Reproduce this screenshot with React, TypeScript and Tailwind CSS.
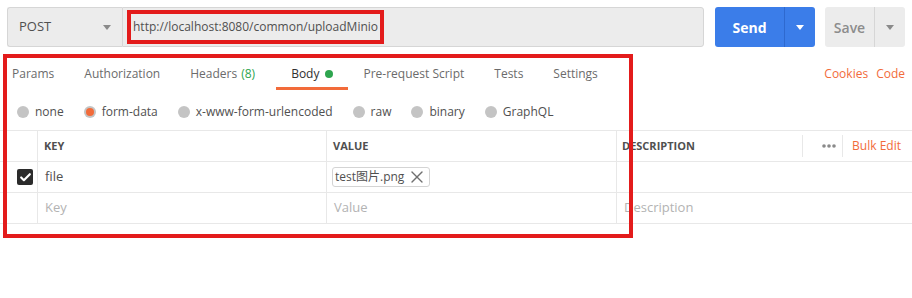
import { Check, X } from 'lucide-react';

function Caret({ color }: { color: string }) {
  return (
    <svg width="8" height="5" viewBox="0 0 8 5">
      <path d="M0 0 L8 0 L4 5 Z" fill={color} />
    </svg>
  );
}

function Radio({ label, active }: { label: string; active?: boolean }) {
  return (
    <div className="flex items-center gap-[6px]">
      <span className="flex h-[12px] w-[12px] items-center justify-center rounded-full bg-[#c4c4c4]">
        {active && <span className="h-[8px] w-[8px] rounded-full bg-[#f26b3a]" />}
      </span>
      <span>{label}</span>
    </div>
  );
}

const tabs = ['Params', 'Authorization', 'Headers', 'Body', 'Pre-request Script', 'Tests', 'Settings'];

export default function App() {
  return (
    <div className="relative h-[298px] w-[912px] bg-white font-['Open_Sans',sans-serif] text-[12px] text-[#505050]">
      {/* request bar */}
      <div className="flex px-[7px] pt-[7px]">
        <div className="flex h-[40px] w-[115px] items-center justify-between rounded-l-[3px] border border-r-0 border-[#d6d6d6] bg-[#ececec] pl-[11px] pr-[11px] text-[13px] text-[#505050]">
          <span>POST</span>
          <Caret color="#8a8a8a" />
        </div>
        <div className="flex h-[40px] w-[582px] items-center rounded-r-[3px] border border-[#d6d6d6] bg-[#ececec] pl-[4px]">
          <span className="flex h-[34px] items-center border-[4px] border-[#e31b1b] px-[2px] text-[12px] text-[#505050]">
            http://localhost:8080/common/uploadMinio
          </span>
        </div>
        <div className="ml-[11px] flex h-[40px] w-[100px] overflow-hidden rounded-[3px] bg-[#3b7de9] text-white">
          <div className="flex w-[69px] items-center justify-center text-[14px] font-bold">Send</div>
          <div className="flex flex-1 items-center justify-center border-l border-[#2e69cf]">
            <Caret color="#ffffff" />
          </div>
        </div>
        <div className="ml-[10px] flex h-[40px] w-[80px] overflow-hidden rounded-[3px] bg-[#ececec] text-[#8c8c8c]">
          <div className="flex w-[49px] items-center justify-center text-[14px] font-semibold">Save</div>
          <div className="flex flex-1 items-center justify-center border-l border-[#d6d6d6]">
            <Caret color="#8a8a8a" />
          </div>
        </div>
      </div>

      {/* tabs */}
      <div className="mt-[13px] flex h-[30px] items-stretch justify-between pl-[12px] pr-[7px]">
        <div className="flex">
          {tabs.map((t, i) => (
            <div
              key={t}
              className={
                'flex items-center border-b-[3px] ' +
                (i === 0 ? 'pr-[15px] ' : t === 'Headers' ? 'pl-[15px] pr-[21px] ' : 'px-[15px] ') +
                (t === 'Body' ? 'border-[#f26b3a] text-[#303030]' : 'border-transparent text-[#6b6b6b]')
              }
            >
              {t}
              {t === 'Headers' && <span className="ml-[4px] text-[#2ea54f]">(8)</span>}
              {t === 'Body' && <span className="ml-[6px] h-[8px] w-[8px] rounded-full bg-[#2ea54f]" />}
            </div>
          ))}
        </div>
        <div className="flex items-center gap-[8px] pb-[3px] text-[#f26b3a]">
          <span>Cookies</span>
          <span>Code</span>
        </div>
      </div>

      {/* body types */}
      <div className="flex h-[40px] items-center gap-[20px] pl-[17px] pt-[4px] text-[12px] text-[#505050]">
        <Radio label="none" />
        <Radio label="form-data" active />
        <Radio label="x-www-form-urlencoded" />
        <Radio label="raw" />
        <Radio label="binary" />
        <Radio label="GraphQL" />
      </div>

      {/* table */}
      <div className="grid grid-cols-[38px_289px_290px_1fr] border-t border-[#e8e8e8]">
        <div className="h-[31px] border-b border-r border-[#e8e8e8]" />
        <div className="flex h-[31px] items-center border-b border-r border-[#e8e8e8] pl-[6px] text-[11px] font-bold text-[#505050]">KEY</div>
        <div className="flex h-[31px] items-center border-b border-r border-[#e8e8e8] pl-[6px] text-[11px] font-bold text-[#505050]">VALUE</div>
        <div className="flex h-[31px] items-center justify-between border-b border-[#e8e8e8] pl-[5px] pr-[11px]">
          <span className="text-[11px] font-bold text-[#505050]">DESCRIPTION</span>
          <div className="flex h-[22px] items-center">
            <span className="h-full border-l border-[#e8e8e8]" />
            <svg width="14" height="4" viewBox="0 0 14 4" className="ml-[19px] mr-[6px]">
              <circle cx="2" cy="2" r="1.8" fill="#8a8a8a" />
              <circle cx="7" cy="2" r="1.8" fill="#8a8a8a" />
              <circle cx="12" cy="2" r="1.8" fill="#8a8a8a" />
            </svg>
            <span className="h-full border-l border-[#e8e8e8]" />
            <span className="ml-[9px] text-[12px] text-[#f26b3a]">Bulk Edit</span>
          </div>
        </div>

        <div className="flex h-[31px] items-center border-b border-r border-[#e8e8e8] pl-[17px]">
          <span className="flex h-[16px] w-[16px] items-center justify-center rounded-[2px] bg-[#2b2b2b]">
            <Check size={13} strokeWidth={4} color="#ffffff" />
          </span>
        </div>
        <div className="flex h-[31px] items-center border-b border-r border-[#e8e8e8] pl-[7px] text-[13px] text-[#505050]">file</div>
        <div className="flex h-[31px] items-center border-b border-r border-[#e8e8e8] pl-[5px] pb-[1px]">
          <span className="flex h-[20px] items-center gap-[3px] rounded-[3px] border border-[#d4d4d4] pl-[2px] pr-[2px] text-[12px] text-[#505050]">
            <span className="font-['Open_Sans','Noto_Sans_CJK_SC',sans-serif]">test图片.png</span>
            <X size={20} strokeWidth={1.6} color="#707070" />
          </span>
        </div>
        <div className="h-[31px] border-b border-[#e8e8e8]" />

        <div className="h-[31px] border-b border-r border-[#e8e8e8]" />
        <div className="flex h-[31px] items-center border-b border-r border-[#e8e8e8] pl-[7px] text-[13px] text-[#b3b3b3]">Key</div>
        <div className="flex h-[31px] items-center border-b border-r border-[#e8e8e8] pl-[7px] text-[13px] text-[#b3b3b3]">Value</div>
        <div className="flex h-[31px] items-center border-b border-[#e8e8e8] pl-[7px] text-[13px] text-[#b3b3b3]">Description</div>
      </div>

      {/* annotation box */}
      <div className="pointer-events-none absolute left-[3px] top-[54px] h-[184px] w-[630px] border-[4px] border-[#e31b1b]" />
    </div>
  );
}
